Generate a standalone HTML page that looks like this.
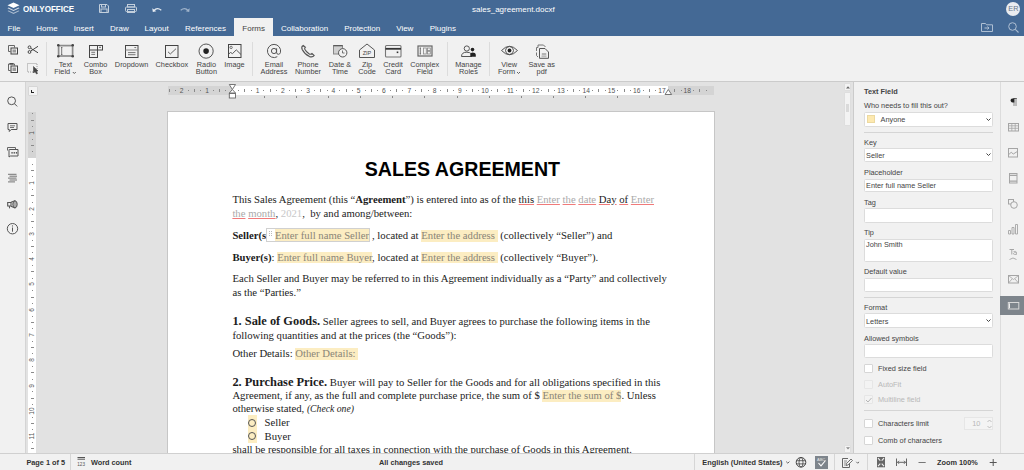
<!DOCTYPE html><html><head><meta charset="utf-8"><style>
html,body{margin:0;padding:0;width:1024px;height:470px;overflow:hidden;background:#e2e2e2;}
.t{position:absolute;white-space:pre;line-height:normal;}
.b{position:absolute;box-sizing:border-box;}
svg.b{overflow:visible}
</style></head><body>
<div class="b" style="left:0px;top:0px;width:1024px;height:36px;background:#446995"></div>
<svg class="b" style="left:7px;top:2px;" width="13" height="13" viewBox="0 0 13 13"><path d="M6.5 0.5 L12.5 3.3 L6.5 6.1 L0.5 3.3Z" fill="#fff"/><path d="M1.6 5.6 L6.5 7.9 L11.4 5.6 L12.5 6.2 L6.5 9 L0.5 6.2Z" fill="#fff" opacity=".75"/><path d="M1.6 8.5 L6.5 10.8 L11.4 8.5 L12.5 9.1 L6.5 12 L0.5 9.1Z" fill="#fff" opacity=".55"/></svg>
<div class="t" style="left:23px;top:2.5999999999999996px;font-family:'Liberation Sans', sans-serif;font-size:9.4px;color:#fff;font-weight:700;font-style:normal;transform:scaleX(0.86);transform-origin:0 0">ONLYOFFICE</div>
<svg class="b" style="left:99px;top:4px;" width="10" height="9" viewBox="0 0 10 9"><path d="M0.5 0.5H8L9.5 2V8.5H0.5Z" fill="none" stroke="#c3cfdc" stroke-width="1"/><rect x="2.5" y="0.5" width="4" height="2.5" fill="none" stroke="#c3cfdc"/><rect x="2" y="5" width="6" height="3.5" fill="none" stroke="#c3cfdc"/></svg>
<svg class="b" style="left:125px;top:4px;" width="12" height="9" viewBox="0 0 12 9"><rect x="2.5" y="0.5" width="7" height="2.5" fill="none" stroke="#c3cfdc"/><rect x="0.5" y="3" width="11" height="4.5" rx="1" fill="none" stroke="#c3cfdc"/><rect x="2.5" y="5.5" width="7" height="3" fill="none" stroke="#c3cfdc"/></svg>
<svg class="b" style="left:152px;top:6px;" width="10" height="6" viewBox="0 0 10 6"><path d="M2 4.5 Q5 1 9.3 4.2" fill="none" stroke="#e8edf3" stroke-width="1.2"/><path d="M0.3 2.2 L0.8 6 L4.3 5.2Z" fill="#e8edf3"/></svg>
<svg class="b" style="left:180px;top:6px;" width="10" height="6" viewBox="0 0 10 6"><path d="M8 4.5 Q5 1 0.7 4.2" fill="none" stroke="#9fb3ca" stroke-width="1.2"/><path d="M9.7 2.2 L9.2 6 L5.7 5.2Z" fill="#9fb3ca"/></svg>
<div class="t" style="left:472px;top:4.699999999999999px;font-family:'Liberation Sans', sans-serif;font-size:8px;color:#fff;font-weight:400;font-style:normal;">sales_agreement.docxf</div>
<div class="b" style="left:1006px;top:2px;width:14px;height:14px;border-radius:7px;background:#e9ecf1"></div>
<div class="t" style="left:1008.3px;top:4.1px;font-family:'Liberation Sans', sans-serif;font-size:7.3px;color:#66768a;font-weight:400;font-style:normal;">ER</div>
<div class="b" style="left:234px;top:18px;width:39px;height:19px;background:#f1f1f1"></div>
<div class="t" style="left:7.5px;top:23.8px;font-family:'Liberation Sans', sans-serif;font-size:8px;color:#fff;font-weight:400;font-style:normal;">File</div>
<div class="t" style="left:36.3px;top:23.8px;font-family:'Liberation Sans', sans-serif;font-size:8px;color:#fff;font-weight:400;font-style:normal;">Home</div>
<div class="t" style="left:73.8px;top:23.8px;font-family:'Liberation Sans', sans-serif;font-size:8px;color:#fff;font-weight:400;font-style:normal;">Insert</div>
<div class="t" style="left:110px;top:23.8px;font-family:'Liberation Sans', sans-serif;font-size:8px;color:#fff;font-weight:400;font-style:normal;">Draw</div>
<div class="t" style="left:144.6px;top:23.8px;font-family:'Liberation Sans', sans-serif;font-size:8px;color:#fff;font-weight:400;font-style:normal;">Layout</div>
<div class="t" style="left:185.1px;top:23.8px;font-family:'Liberation Sans', sans-serif;font-size:8px;color:#fff;font-weight:400;font-style:normal;">References</div>
<div class="t" style="left:242.3px;top:23.8px;font-family:'Liberation Sans', sans-serif;font-size:8px;color:#444;font-weight:400;font-style:normal;">Forms</div>
<div class="t" style="left:281px;top:23.8px;font-family:'Liberation Sans', sans-serif;font-size:8px;color:#fff;font-weight:400;font-style:normal;">Collaboration</div>
<div class="t" style="left:344.2px;top:23.8px;font-family:'Liberation Sans', sans-serif;font-size:8px;color:#fff;font-weight:400;font-style:normal;">Protection</div>
<div class="t" style="left:396.2px;top:23.8px;font-family:'Liberation Sans', sans-serif;font-size:8px;color:#fff;font-weight:400;font-style:normal;">View</div>
<div class="t" style="left:429.7px;top:23.8px;font-family:'Liberation Sans', sans-serif;font-size:8px;color:#fff;font-weight:400;font-style:normal;">Plugins</div>
<svg class="b" style="left:981px;top:23px;" width="12" height="9" viewBox="0 0 12 9"><path d="M0.5 0.5H4.5L5.5 1.8H11.5V8.5H0.5Z" fill="none" stroke="#aebfd3"/><path d="M3.5 5H8M6.5 3.5L8 5L6.5 6.5" fill="none" stroke="#aebfd3"/></svg>
<svg class="b" style="left:1008px;top:22px;" width="11" height="11" viewBox="0 0 11 11"><circle cx="4.5" cy="4.5" r="3.8" fill="none" stroke="#aebfd3" stroke-width="1"/><path d="M7.3 7.3L10.5 10.5" stroke="#aebfd3" stroke-width="1.1"/></svg>
<div class="b" style="left:0px;top:36px;width:1024px;height:45px;background:#f1f1f1"></div>
<div class="b" style="left:0px;top:81px;width:1024px;height:1px;background:#cbcbcb"></div>
<div class="t" style="left:-34.599999999999994px;width:200px;text-align:center;top:59.8px;font-family:'Liberation Sans', sans-serif;font-size:7.33px;color:#444;font-weight:400;">Text</div>
<div class="t" style="left:-37.8px;width:200px;text-align:center;top:67.1px;font-family:'Liberation Sans', sans-serif;font-size:7.33px;color:#444;font-weight:400;">Field</div>
<div class="t" style="left:-4.5px;width:200px;text-align:center;top:59.8px;font-family:'Liberation Sans', sans-serif;font-size:7.33px;color:#444;font-weight:400;">Combo</div>
<div class="t" style="left:-4.5px;width:200px;text-align:center;top:67.1px;font-family:'Liberation Sans', sans-serif;font-size:7.33px;color:#444;font-weight:400;">Box</div>
<div class="t" style="left:31.55000000000001px;width:200px;text-align:center;top:59.8px;font-family:'Liberation Sans', sans-serif;font-size:7.33px;color:#444;font-weight:400;">Dropdown</div>
<div class="t" style="left:71.85px;width:200px;text-align:center;top:59.8px;font-family:'Liberation Sans', sans-serif;font-size:7.33px;color:#444;font-weight:400;">Checkbox</div>
<div class="t" style="left:106.4px;width:200px;text-align:center;top:59.8px;font-family:'Liberation Sans', sans-serif;font-size:7.33px;color:#444;font-weight:400;">Radio</div>
<div class="t" style="left:106.4px;width:200px;text-align:center;top:67.1px;font-family:'Liberation Sans', sans-serif;font-size:7.33px;color:#444;font-weight:400;">Button</div>
<div class="t" style="left:134.45px;width:200px;text-align:center;top:59.8px;font-family:'Liberation Sans', sans-serif;font-size:7.33px;color:#444;font-weight:400;">Image</div>
<div class="t" style="left:174px;width:200px;text-align:center;top:59.8px;font-family:'Liberation Sans', sans-serif;font-size:7.33px;color:#444;font-weight:400;">Email</div>
<div class="t" style="left:174px;width:200px;text-align:center;top:67.1px;font-family:'Liberation Sans', sans-serif;font-size:7.33px;color:#444;font-weight:400;">Address</div>
<div class="t" style="left:208px;width:200px;text-align:center;top:59.8px;font-family:'Liberation Sans', sans-serif;font-size:7.33px;color:#444;font-weight:400;">Phone</div>
<div class="t" style="left:208px;width:200px;text-align:center;top:67.1px;font-family:'Liberation Sans', sans-serif;font-size:7.33px;color:#444;font-weight:400;">Number</div>
<div class="t" style="left:240px;width:200px;text-align:center;top:59.8px;font-family:'Liberation Sans', sans-serif;font-size:7.33px;color:#444;font-weight:400;">Date &amp;</div>
<div class="t" style="left:240px;width:200px;text-align:center;top:67.1px;font-family:'Liberation Sans', sans-serif;font-size:7.33px;color:#444;font-weight:400;">Time</div>
<div class="t" style="left:267.1px;width:200px;text-align:center;top:59.8px;font-family:'Liberation Sans', sans-serif;font-size:7.33px;color:#444;font-weight:400;">Zip</div>
<div class="t" style="left:267.1px;width:200px;text-align:center;top:67.1px;font-family:'Liberation Sans', sans-serif;font-size:7.33px;color:#444;font-weight:400;">Code</div>
<div class="t" style="left:293.1px;width:200px;text-align:center;top:59.8px;font-family:'Liberation Sans', sans-serif;font-size:7.33px;color:#444;font-weight:400;">Credit</div>
<div class="t" style="left:293.1px;width:200px;text-align:center;top:67.1px;font-family:'Liberation Sans', sans-serif;font-size:7.33px;color:#444;font-weight:400;">Card</div>
<div class="t" style="left:324.7px;width:200px;text-align:center;top:59.8px;font-family:'Liberation Sans', sans-serif;font-size:7.33px;color:#444;font-weight:400;">Complex</div>
<div class="t" style="left:324.7px;width:200px;text-align:center;top:67.1px;font-family:'Liberation Sans', sans-serif;font-size:7.33px;color:#444;font-weight:400;">Field</div>
<div class="t" style="left:368.45px;width:200px;text-align:center;top:59.8px;font-family:'Liberation Sans', sans-serif;font-size:7.33px;color:#444;font-weight:400;">Manage</div>
<div class="t" style="left:368.45px;width:200px;text-align:center;top:67.1px;font-family:'Liberation Sans', sans-serif;font-size:7.33px;color:#444;font-weight:400;">Roles</div>
<div class="t" style="left:409.2px;width:200px;text-align:center;top:59.8px;font-family:'Liberation Sans', sans-serif;font-size:7.33px;color:#444;font-weight:400;">View</div>
<div class="t" style="left:406.5px;width:200px;text-align:center;top:67.1px;font-family:'Liberation Sans', sans-serif;font-size:7.33px;color:#444;font-weight:400;">Form</div>
<div class="t" style="left:441.70000000000005px;width:200px;text-align:center;top:59.8px;font-family:'Liberation Sans', sans-serif;font-size:7.33px;color:#444;font-weight:400;">Save as</div>
<div class="t" style="left:441.70000000000005px;width:200px;text-align:center;top:67.1px;font-family:'Liberation Sans', sans-serif;font-size:7.33px;color:#444;font-weight:400;">pdf</div>
<div class="b" style="left:0px;top:82px;width:26px;height:371px;background:#f1f1f1"></div>
<div class="b" style="left:25px;top:82px;width:1px;height:371px;background:#d4d4d4"></div>
<div class="b" style="left:27.5px;top:86px;width:10px;height:10px;background:#f3f3f3;border:1px solid #d6d6d6;border-radius:1px"></div>
<div class="b" style="left:30.5px;top:89.5px;width:1.3px;height:3.5px;background:#222"></div>
<div class="b" style="left:30.5px;top:91.7px;width:3.8px;height:1.3px;background:#222"></div>
<div class="b" style="left:168px;top:86px;width:546px;height:9px;background:#d4d4d4"></div>
<div class="b" style="left:232px;top:86px;width:436px;height:9px;background:#fff"></div>
<div class="b" style="left:28px;top:112px;width:8px;height:341px;background:#d4d4d4"></div>
<div class="b" style="left:28px;top:158px;width:8px;height:295px;background:#fff"></div>
<div class="b" style="left:167px;top:111px;width:548px;height:342px;background:#fff;border:1px solid #c6c6c6;border-bottom:none"></div>
<div class="b" style="left:843.7px;top:83px;width:7.6px;height:7.8px;background:#f3f3f3;border:1px solid #dedede;border-radius:1px"></div>
<div class="b" style="left:843.7px;top:92px;width:7.6px;height:34px;background:#f3f3f3;border:1px solid #dedede;border-radius:1px"></div>
<div class="b" style="left:846.2px;top:104px;width:2.7px;height:7.7px;background:#dadada"></div>
<div class="b" style="left:843.7px;top:444.5px;width:7.6px;height:8px;background:#f3f3f3;border:1px solid #dedede;border-radius:1px"></div>
<svg class="b" style="left:845.5px;top:85.5px;" width="4" height="3" viewBox="0 0 4 3"><path d="M0 2.5L2 0.3L4 2.5Z" fill="#666"/></svg>
<svg class="b" style="left:845.5px;top:447px;" width="4" height="3" viewBox="0 0 4 3"><path d="M0 0.3L2 2.5L4 0.3Z" fill="#888"/></svg>
<div class="b" style="left:853px;top:82px;width:147px;height:371px;background:#f1f1f1"></div>
<div class="b" style="left:853px;top:82px;width:1px;height:371px;background:#cbcbcb"></div>
<div class="b" style="left:1000px;top:82px;width:24px;height:371px;background:#f1f1f1"></div>
<div class="b" style="left:1000px;top:82px;width:1px;height:371px;background:#dcdcdc"></div>
<div class="b" style="left:1000px;top:296px;width:24px;height:19px;background:#7e858c"></div>
<div class="t" style="left:364.8px;top:157.5px;font-family:'Liberation Sans', sans-serif;font-size:19.6px;color:#000;font-weight:700;font-style:normal;">SALES AGREEMENT</div>
<div class="t" style="left:232.4px;top:193.2px;font-family:'Liberation Serif', serif;font-size:10.7px;color:#1c1c1c">This Sales Agreement (this “<span style="font-weight:700">Agreement</span>”) is entered into as of the <span style="text-decoration:underline;text-decoration-color:#f07a7a;text-underline-offset:0.5px">this</span> <span style="color:#aaa;text-decoration:underline;text-decoration-color:#f07a7a;text-underline-offset:0.5px">Enter</span> <span style="color:#aaa;text-decoration:underline;text-decoration-color:#f07a7a;text-underline-offset:0.5px">the</span> <span style="color:#aaa;text-decoration:underline;text-decoration-color:#f07a7a;text-underline-offset:0.5px">date</span> <span style="text-decoration:underline;text-decoration-color:#f07a7a;text-underline-offset:0.5px">Day</span> <span style="text-decoration:underline;text-decoration-color:#f07a7a;text-underline-offset:0.5px">of</span> <span style="color:#aaa;text-decoration:underline;text-decoration-color:#f07a7a;text-underline-offset:0.5px">Enter</span></div>
<div class="t" style="left:232.4px;top:207px;font-family:'Liberation Serif', serif;font-size:10.7px;color:#1c1c1c"><span style="color:#aaa;text-decoration:underline;text-decoration-color:#f07a7a;text-underline-offset:0.5px">the</span> <span style="color:#aaa;text-decoration:underline;text-decoration-color:#f07a7a;text-underline-offset:0.5px">month</span>, <span style="color:#c8c8c8">2021</span>,  by and among/between:</div>
<div class="t" style="left:232.4px;top:229px;font-family:'Liberation Serif', serif;font-size:10.7px;color:#1c1c1c"><span style="font-weight:700">Seller(s</span></div>
<div class="b" style="left:266px;top:228px;width:104px;height:14px;border:1px solid #d0d0d0;background:#fff"></div>
<div class="b" style="left:275px;top:229px;width:94px;height:12px;background:#fcedc2"></div>
<div class="b" style="left:269px;top:230.5px;width:3px;height:5px;border-left:1px dotted #bbb;border-right:1px dotted #bbb"></div>
<div class="t" style="left:275.0px;top:229px;font-family:'Liberation Serif', serif;font-size:10.7px;color:#1c1c1c"><span style="color:#8a8578">Enter full name Seller</span></div>
<div class="t" style="left:372.0px;top:229px;font-family:'Liberation Serif', serif;font-size:10.7px;color:#1c1c1c">, located at <span style="background:linear-gradient(transparent 0.8px,#fcedc2 0.8px);padding-bottom:0.8px;color:#8a8578">Enter the address </span> (collectively “Seller”) and</div>
<div class="t" style="left:232.4px;top:250.5px;font-family:'Liberation Serif', serif;font-size:10.7px;color:#1c1c1c"><span style="font-weight:700">Buyer(s)</span>: <span style="background:linear-gradient(transparent 0.8px,#fcedc2 0.8px);padding-bottom:0.8px;color:#8a8578">Enter full name Buyer</span>, located at <span style="background:linear-gradient(transparent 0.8px,#fcedc2 0.8px);padding-bottom:0.8px;color:#8a8578">Enter the address </span> (collectively “Buyer”).</div>
<div class="t" style="left:232.4px;top:272.2px;font-family:'Liberation Serif', serif;font-size:10.7px;color:#1c1c1c">Each Seller and Buyer may be referred to in this Agreement individually as a “Party” and collectively</div>
<div class="t" style="left:232.4px;top:286px;font-family:'Liberation Serif', serif;font-size:10.7px;color:#1c1c1c">as the “Parties.”</div>
<div class="t" style="left:232.4px;top:314px;font-family:'Liberation Serif', serif;font-size:10.7px;color:#1c1c1c"><span style="font-weight:700;font-size:12.4px">1. Sale of Goods.</span> Seller agrees to sell, and Buyer agrees to purchase the following items in the</div>
<div class="t" style="left:232.4px;top:328.6px;font-family:'Liberation Serif', serif;font-size:10.7px;color:#1c1c1c">following quantities and at the prices (the “Goods”):</div>
<div class="t" style="left:232.4px;top:347.4px;font-family:'Liberation Serif', serif;font-size:10.7px;color:#1c1c1c">Other Details: <span style="background:linear-gradient(transparent 0.8px,#fcedc2 0.8px);padding-bottom:0.8px;color:#8a8578">Other Details: </span></div>
<div class="t" style="left:232.4px;top:374.7px;font-family:'Liberation Serif', serif;font-size:10.7px;color:#1c1c1c"><span style="font-weight:700;font-size:12.4px">2. Purchase Price.</span> Buyer will pay to Seller for the Goods and for all obligations specified in this</div>
<div class="t" style="left:232.4px;top:389.3px;font-family:'Liberation Serif', serif;font-size:10.7px;color:#1c1c1c">Agreement, if any, as the full and complete purchase price, the sum of $ <span style="background:linear-gradient(transparent 0.8px,#fcedc2 0.8px);padding-bottom:0.8px;color:#8a8578">Enter the sum of $</span>. Unless</div>
<div class="t" style="left:232.4px;top:402.3px;font-family:'Liberation Serif', serif;font-size:10.7px;color:#1c1c1c">otherwise stated, <span style="font-style:italic;font-size:9.7px">(Check one)</span></div>
<div class="b" style="left:248px;top:415px;width:9px;height:28px;background:#fcedc2"></div>
<div class="b" style="left:248px;top:418.6px;width:8.2px;height:8.2px;border:1px solid #555;border-radius:50%"></div>
<div class="b" style="left:248px;top:432.3px;width:8.2px;height:8.2px;border:1px solid #555;border-radius:50%"></div>
<div class="t" style="left:264.6px;top:416.3px;font-family:'Liberation Serif', serif;font-size:10.7px;color:#1c1c1c">Seller</div>
<div class="t" style="left:264.6px;top:429.6px;font-family:'Liberation Serif', serif;font-size:10.7px;color:#1c1c1c">Buyer</div>
<div class="t" style="left:232.4px;top:443.2px;font-family:'Liberation Serif', serif;font-size:10.7px;color:#1c1c1c">shall be responsible for all taxes in connection with the purchase of Goods in this Agreement.</div>
<div class="t" style="left:864px;top:87px;font-family:'Liberation Sans', sans-serif;font-size:7.33px;color:#444;font-weight:700;font-style:normal;">Text Field</div>
<div class="t" style="left:864px;top:101px;font-family:'Liberation Sans', sans-serif;font-size:7.33px;color:#444;font-weight:400;font-style:normal;">Who needs to fill this out?</div>
<div class="b" style="left:863.5px;top:112px;width:129.5px;height:14.5px;background:#fff;border:1px solid #dcdcdc;border-radius:1.5px"></div>
<div class="b" style="left:867.3px;top:115.2px;width:8px;height:8px;background:#fde9b0;border:1px solid #ecd9a0"></div>
<div class="t" style="left:880.6px;top:114.8px;font-family:'Liberation Sans', sans-serif;font-size:7.33px;color:#444;font-weight:400;font-style:normal;">Anyone</div>
<svg class="b" style="left:986px;top:117.5px;" width="5" height="3" viewBox="0 0 5 3"><path d="M0.5 0.5L2.5 2.5L4.5 0.5" fill="none" stroke="#444" stroke-width="1"/></svg>
<div class="b" style="left:864px;top:132px;width:129px;height:1px;background:#d5d5d5"></div>
<div class="t" style="left:864px;top:138px;font-family:'Liberation Sans', sans-serif;font-size:7.33px;color:#444;font-weight:400;font-style:normal;">Key</div>
<div class="b" style="left:863.5px;top:147.6px;width:129.5px;height:14.5px;background:#fff;border:1px solid #dcdcdc;border-radius:1.5px"></div>
<div class="t" style="left:866px;top:150.8px;font-family:'Liberation Sans', sans-serif;font-size:7.33px;color:#444;font-weight:400;font-style:normal;">Seller</div>
<svg class="b" style="left:986px;top:153.35px;" width="5" height="3" viewBox="0 0 5 3"><path d="M0.5 0.5L2.5 2.5L4.5 0.5" fill="none" stroke="#444" stroke-width="1"/></svg>
<div class="t" style="left:864px;top:167.9px;font-family:'Liberation Sans', sans-serif;font-size:7.33px;color:#444;font-weight:400;font-style:normal;">Placeholder</div>
<div class="b" style="left:863.5px;top:178.7px;width:129.5px;height:13.5px;background:#fff;border:1px solid #dcdcdc;border-radius:1.5px"></div>
<div class="t" style="left:866px;top:181.3px;font-family:'Liberation Sans', sans-serif;font-size:7.33px;color:#444;font-weight:400;font-style:normal;">Enter full name Seller</div>
<div class="t" style="left:864px;top:197.8px;font-family:'Liberation Sans', sans-serif;font-size:7.33px;color:#444;font-weight:400;font-style:normal;">Tag</div>
<div class="b" style="left:863.5px;top:208.4px;width:129.5px;height:14.299999999999983px;background:#fff;border:1px solid #dcdcdc;border-radius:1.5px"></div>
<div class="t" style="left:864px;top:227.6px;font-family:'Liberation Sans', sans-serif;font-size:7.33px;color:#444;font-weight:400;font-style:normal;">Tip</div>
<div class="b" style="left:863.5px;top:238.5px;width:129.5px;height:23.69999999999999px;background:#fff;border:1px solid #dcdcdc;border-radius:1.5px"></div>
<div class="t" style="left:866px;top:239.6px;font-family:'Liberation Sans', sans-serif;font-size:7.33px;color:#444;font-weight:400;font-style:normal;">John Smith</div>
<div class="t" style="left:864px;top:267.2px;font-family:'Liberation Sans', sans-serif;font-size:7.33px;color:#444;font-weight:400;font-style:normal;">Default value</div>
<div class="b" style="left:863.5px;top:278px;width:129.5px;height:14px;background:#fff;border:1px solid #dcdcdc;border-radius:1.5px"></div>
<div class="b" style="left:864px;top:297px;width:129px;height:1px;background:#d5d5d5"></div>
<div class="t" style="left:864px;top:303.3px;font-family:'Liberation Sans', sans-serif;font-size:7.33px;color:#444;font-weight:400;font-style:normal;">Format</div>
<div class="b" style="left:863.5px;top:313.4px;width:129.5px;height:14.800000000000011px;background:#fff;border:1px solid #dcdcdc;border-radius:1.5px"></div>
<div class="t" style="left:866px;top:316.6px;font-family:'Liberation Sans', sans-serif;font-size:7.33px;color:#444;font-weight:400;font-style:normal;">Letters</div>
<svg class="b" style="left:986px;top:319.29999999999995px;" width="5" height="3" viewBox="0 0 5 3"><path d="M0.5 0.5L2.5 2.5L4.5 0.5" fill="none" stroke="#444" stroke-width="1"/></svg>
<div class="t" style="left:864px;top:334px;font-family:'Liberation Sans', sans-serif;font-size:7.33px;color:#444;font-weight:400;font-style:normal;">Allowed symbols</div>
<div class="b" style="left:863.5px;top:344px;width:129.5px;height:14.300000000000011px;background:#fff;border:1px solid #dcdcdc;border-radius:1.5px"></div>
<div class="b" style="left:863.5px;top:364.4px;width:9px;height:9px;background:#fff;border:1px solid #d6d6d6;border-radius:1px"></div>
<div class="t" style="left:878px;top:364px;font-family:'Liberation Sans', sans-serif;font-size:7.33px;color:#444;font-weight:400;font-style:normal;">Fixed size field</div>
<div class="b" style="left:863.5px;top:380px;width:9px;height:9px;background:#f3f3f3;border:1px solid #e6e6e6;border-radius:1px"></div>
<div class="t" style="left:878px;top:379.8px;font-family:'Liberation Sans', sans-serif;font-size:7.33px;color:#b8b8b8;font-weight:400;font-style:normal;">AutoFit</div>
<div class="b" style="left:863.5px;top:395px;width:9px;height:9px;background:#f3f3f3;border:1px solid #e6e6e6;border-radius:1px"></div>
<svg class="b" style="left:864.5px;top:396.5px;" width="7" height="6" viewBox="0 0 7 6"><path d="M1 3L3 5L6.5 1" fill="none" stroke="#b5b5b5" stroke-width="1"/></svg>
<div class="t" style="left:878px;top:394.6px;font-family:'Liberation Sans', sans-serif;font-size:7.33px;color:#b8b8b8;font-weight:400;font-style:normal;">Multiline field</div>
<div class="b" style="left:864px;top:410px;width:129px;height:1px;background:#d5d5d5"></div>
<div class="b" style="left:863.5px;top:418.6px;width:9px;height:9px;background:#fff;border:1px solid #d6d6d6;border-radius:1px"></div>
<div class="t" style="left:878px;top:418.6px;font-family:'Liberation Sans', sans-serif;font-size:7.33px;color:#444;font-weight:400;font-style:normal;">Characters limit</div>
<div class="b" style="left:963.6px;top:416.7px;width:29.4px;height:13.3px;background:#f4f4f4;border:1px solid #e6e6e6"></div>
<div class="t" style="left:972.3px;top:418.8px;font-family:'Liberation Sans', sans-serif;font-size:7.33px;color:#b8b8b8;font-weight:400;font-style:normal;">10</div>
<svg class="b" style="left:987px;top:418.5px;" width="5" height="10" viewBox="0 0 5 10"><path d="M0.5 3L2.5 1L4.5 3M0.5 7L2.5 9L4.5 7" fill="none" stroke="#b8b8b8" stroke-width=".9"/></svg>
<div class="b" style="left:863.5px;top:436px;width:9px;height:9px;background:#fff;border:1px solid #d6d6d6;border-radius:1px"></div>
<div class="t" style="left:878px;top:436.2px;font-family:'Liberation Sans', sans-serif;font-size:7.33px;color:#444;font-weight:400;font-style:normal;">Comb of characters</div>
<div class="t" style="left:878.7px;top:450.6px;font-family:'Liberation Sans', sans-serif;font-size:7.33px;color:#444;font-weight:400;font-style:normal;">Cell width</div>
<div class="b" style="left:0px;top:453px;width:1024px;height:17px;background:#f1f1f1"></div>
<div class="b" style="left:0px;top:453px;width:1024px;height:1px;background:#d0d0d0"></div>
<div class="t" style="left:26.4px;top:458px;font-family:'Liberation Sans', sans-serif;font-size:7.33px;color:#333;font-weight:700;font-style:normal;">Page 1 of 5</div>
<div class="b" style="left:70px;top:454px;width:1px;height:16px;background:#d6d6d6"></div>
<div class="t" style="left:90.9px;top:458px;font-family:'Liberation Sans', sans-serif;font-size:7.33px;color:#333;font-weight:700;font-style:normal;">Word count</div>
<div class="t" style="left:379px;top:458px;font-family:'Liberation Sans', sans-serif;font-size:7.33px;color:#333;font-weight:700;font-style:normal;">All changes saved</div>
<div class="b" style="left:694px;top:454px;width:1px;height:16px;background:#d6d6d6"></div>
<div class="t" style="left:702.3px;top:457.6px;font-family:'Liberation Sans', sans-serif;font-size:7.33px;color:#333;font-weight:700;font-style:normal;">English (United States)</div>
<div class="b" style="left:815px;top:455.5px;width:13px;height:13px;background:#7e858c"></div>
<div class="b" style="left:834px;top:454px;width:1px;height:16px;background:#d6d6d6"></div>
<div class="b" style="left:867px;top:454px;width:1px;height:16px;background:#d6d6d6"></div>
<div class="t" style="left:937px;top:458px;font-family:'Liberation Sans', sans-serif;font-size:7.33px;color:#333;font-weight:700;font-style:normal;">Zoom 100%</div>
<div class="b" style="left:168.60000000000002px;top:88.5px;width:1px;height:3px;background:#8a8a8a"></div>
<div class="b" style="left:174.92000000000002px;top:89.5px;width:1px;height:1px;background:#8a8a8a"></div>
<div class="t" style="left:81.74000000000001px;width:200px;text-align:center;top:87.3px;font-family:'Liberation Sans', sans-serif;font-size:6.7px;color:#555;font-weight:400;">2</div>
<div class="b" style="left:187.56px;top:89.5px;width:1px;height:1px;background:#8a8a8a"></div>
<div class="b" style="left:193.88px;top:88.5px;width:1px;height:3px;background:#8a8a8a"></div>
<div class="b" style="left:200.20000000000002px;top:89.5px;width:1px;height:1px;background:#8a8a8a"></div>
<div class="t" style="left:107.02000000000001px;width:200px;text-align:center;top:87.3px;font-family:'Liberation Sans', sans-serif;font-size:6.7px;color:#555;font-weight:400;">1</div>
<div class="b" style="left:212.84px;top:89.5px;width:1px;height:1px;background:#8a8a8a"></div>
<div class="b" style="left:219.16000000000003px;top:88.5px;width:1px;height:3px;background:#8a8a8a"></div>
<div class="b" style="left:225.48000000000002px;top:89.5px;width:1px;height:1px;background:#8a8a8a"></div>
<div class="b" style="left:238.12px;top:89.5px;width:1px;height:1px;background:#8a8a8a"></div>
<div class="b" style="left:244.44px;top:88.5px;width:1px;height:3px;background:#8a8a8a"></div>
<div class="b" style="left:250.76000000000002px;top:89.5px;width:1px;height:1px;background:#8a8a8a"></div>
<div class="t" style="left:157.58000000000004px;width:200px;text-align:center;top:87.3px;font-family:'Liberation Sans', sans-serif;font-size:6.7px;color:#555;font-weight:400;">1</div>
<div class="b" style="left:263.40000000000003px;top:89.5px;width:1px;height:1px;background:#8a8a8a"></div>
<div class="b" style="left:269.72px;top:88.5px;width:1px;height:3px;background:#8a8a8a"></div>
<div class="b" style="left:276.04px;top:89.5px;width:1px;height:1px;background:#8a8a8a"></div>
<div class="t" style="left:182.86px;width:200px;text-align:center;top:87.3px;font-family:'Liberation Sans', sans-serif;font-size:6.7px;color:#555;font-weight:400;">2</div>
<div class="b" style="left:288.68px;top:89.5px;width:1px;height:1px;background:#8a8a8a"></div>
<div class="b" style="left:295.0px;top:88.5px;width:1px;height:3px;background:#8a8a8a"></div>
<div class="b" style="left:301.32px;top:89.5px;width:1px;height:1px;background:#8a8a8a"></div>
<div class="t" style="left:208.14px;width:200px;text-align:center;top:87.3px;font-family:'Liberation Sans', sans-serif;font-size:6.7px;color:#555;font-weight:400;">3</div>
<div class="b" style="left:313.96px;top:89.5px;width:1px;height:1px;background:#8a8a8a"></div>
<div class="b" style="left:320.28px;top:88.5px;width:1px;height:3px;background:#8a8a8a"></div>
<div class="b" style="left:326.59999999999997px;top:89.5px;width:1px;height:1px;background:#8a8a8a"></div>
<div class="t" style="left:233.42000000000002px;width:200px;text-align:center;top:87.3px;font-family:'Liberation Sans', sans-serif;font-size:6.7px;color:#555;font-weight:400;">4</div>
<div class="b" style="left:339.24px;top:89.5px;width:1px;height:1px;background:#8a8a8a"></div>
<div class="b" style="left:345.56px;top:88.5px;width:1px;height:3px;background:#8a8a8a"></div>
<div class="b" style="left:351.88px;top:89.5px;width:1px;height:1px;background:#8a8a8a"></div>
<div class="t" style="left:258.70000000000005px;width:200px;text-align:center;top:87.3px;font-family:'Liberation Sans', sans-serif;font-size:6.7px;color:#555;font-weight:400;">5</div>
<div class="b" style="left:364.52000000000004px;top:89.5px;width:1px;height:1px;background:#8a8a8a"></div>
<div class="b" style="left:370.84000000000003px;top:88.5px;width:1px;height:3px;background:#8a8a8a"></div>
<div class="b" style="left:377.16px;top:89.5px;width:1px;height:1px;background:#8a8a8a"></div>
<div class="t" style="left:283.98px;width:200px;text-align:center;top:87.3px;font-family:'Liberation Sans', sans-serif;font-size:6.7px;color:#555;font-weight:400;">6</div>
<div class="b" style="left:389.8px;top:89.5px;width:1px;height:1px;background:#8a8a8a"></div>
<div class="b" style="left:396.12px;top:88.5px;width:1px;height:3px;background:#8a8a8a"></div>
<div class="b" style="left:402.44px;top:89.5px;width:1px;height:1px;background:#8a8a8a"></div>
<div class="t" style="left:309.26px;width:200px;text-align:center;top:87.3px;font-family:'Liberation Sans', sans-serif;font-size:6.7px;color:#555;font-weight:400;">7</div>
<div class="b" style="left:415.08px;top:89.5px;width:1px;height:1px;background:#8a8a8a"></div>
<div class="b" style="left:421.4px;top:88.5px;width:1px;height:3px;background:#8a8a8a"></div>
<div class="b" style="left:427.71999999999997px;top:89.5px;width:1px;height:1px;background:#8a8a8a"></div>
<div class="t" style="left:334.54px;width:200px;text-align:center;top:87.3px;font-family:'Liberation Sans', sans-serif;font-size:6.7px;color:#555;font-weight:400;">8</div>
<div class="b" style="left:440.36px;top:89.5px;width:1px;height:1px;background:#8a8a8a"></div>
<div class="b" style="left:446.68px;top:88.5px;width:1px;height:3px;background:#8a8a8a"></div>
<div class="b" style="left:453.0px;top:89.5px;width:1px;height:1px;background:#8a8a8a"></div>
<div class="t" style="left:359.82000000000005px;width:200px;text-align:center;top:87.3px;font-family:'Liberation Sans', sans-serif;font-size:6.7px;color:#555;font-weight:400;">9</div>
<div class="b" style="left:465.64000000000004px;top:89.5px;width:1px;height:1px;background:#8a8a8a"></div>
<div class="b" style="left:471.96000000000004px;top:88.5px;width:1px;height:3px;background:#8a8a8a"></div>
<div class="b" style="left:478.28000000000003px;top:89.5px;width:1px;height:1px;background:#8a8a8a"></div>
<div class="t" style="left:385.1px;width:200px;text-align:center;top:87.3px;font-family:'Liberation Sans', sans-serif;font-size:6.7px;color:#555;font-weight:400;">10</div>
<div class="b" style="left:490.92px;top:89.5px;width:1px;height:1px;background:#8a8a8a"></div>
<div class="b" style="left:497.24px;top:88.5px;width:1px;height:3px;background:#8a8a8a"></div>
<div class="b" style="left:503.56px;top:89.5px;width:1px;height:1px;background:#8a8a8a"></div>
<div class="t" style="left:410.38000000000005px;width:200px;text-align:center;top:87.3px;font-family:'Liberation Sans', sans-serif;font-size:6.7px;color:#555;font-weight:400;">11</div>
<div class="b" style="left:516.2px;top:89.5px;width:1px;height:1px;background:#8a8a8a"></div>
<div class="b" style="left:522.5200000000001px;top:88.5px;width:1px;height:3px;background:#8a8a8a"></div>
<div class="b" style="left:528.84px;top:89.5px;width:1px;height:1px;background:#8a8a8a"></div>
<div class="t" style="left:435.6600000000001px;width:200px;text-align:center;top:87.3px;font-family:'Liberation Sans', sans-serif;font-size:6.7px;color:#555;font-weight:400;">12</div>
<div class="b" style="left:541.4800000000001px;top:89.5px;width:1px;height:1px;background:#8a8a8a"></div>
<div class="b" style="left:547.8000000000001px;top:88.5px;width:1px;height:3px;background:#8a8a8a"></div>
<div class="b" style="left:554.1200000000001px;top:89.5px;width:1px;height:1px;background:#8a8a8a"></div>
<div class="t" style="left:460.94000000000005px;width:200px;text-align:center;top:87.3px;font-family:'Liberation Sans', sans-serif;font-size:6.7px;color:#555;font-weight:400;">13</div>
<div class="b" style="left:566.7600000000001px;top:89.5px;width:1px;height:1px;background:#8a8a8a"></div>
<div class="b" style="left:573.08px;top:88.5px;width:1px;height:3px;background:#8a8a8a"></div>
<div class="b" style="left:579.4000000000001px;top:89.5px;width:1px;height:1px;background:#8a8a8a"></div>
<div class="t" style="left:486.22px;width:200px;text-align:center;top:87.3px;font-family:'Liberation Sans', sans-serif;font-size:6.7px;color:#555;font-weight:400;">14</div>
<div class="b" style="left:592.0400000000001px;top:89.5px;width:1px;height:1px;background:#8a8a8a"></div>
<div class="b" style="left:598.36px;top:88.5px;width:1px;height:3px;background:#8a8a8a"></div>
<div class="b" style="left:604.6800000000001px;top:89.5px;width:1px;height:1px;background:#8a8a8a"></div>
<div class="t" style="left:511.5px;width:200px;text-align:center;top:87.3px;font-family:'Liberation Sans', sans-serif;font-size:6.7px;color:#555;font-weight:400;">15</div>
<div class="b" style="left:617.32px;top:89.5px;width:1px;height:1px;background:#8a8a8a"></div>
<div class="b" style="left:623.64px;top:88.5px;width:1px;height:3px;background:#8a8a8a"></div>
<div class="b" style="left:629.96px;top:89.5px;width:1px;height:1px;background:#8a8a8a"></div>
<div class="t" style="left:536.78px;width:200px;text-align:center;top:87.3px;font-family:'Liberation Sans', sans-serif;font-size:6.7px;color:#555;font-weight:400;">16</div>
<div class="b" style="left:642.6px;top:89.5px;width:1px;height:1px;background:#8a8a8a"></div>
<div class="b" style="left:648.92px;top:88.5px;width:1px;height:3px;background:#8a8a8a"></div>
<div class="b" style="left:655.24px;top:89.5px;width:1px;height:1px;background:#8a8a8a"></div>
<div class="t" style="left:562.06px;width:200px;text-align:center;top:87.3px;font-family:'Liberation Sans', sans-serif;font-size:6.7px;color:#555;font-weight:400;">17</div>
<div class="b" style="left:667.88px;top:89.5px;width:1px;height:1px;background:#8a8a8a"></div>
<div class="b" style="left:674.1999999999999px;top:88.5px;width:1px;height:3px;background:#8a8a8a"></div>
<div class="b" style="left:680.52px;top:89.5px;width:1px;height:1px;background:#8a8a8a"></div>
<div class="t" style="left:587.34px;width:200px;text-align:center;top:87.3px;font-family:'Liberation Sans', sans-serif;font-size:6.7px;color:#555;font-weight:400;">18</div>
<div class="b" style="left:693.1600000000001px;top:89.5px;width:1px;height:1px;background:#8a8a8a"></div>
<div class="b" style="left:699.48px;top:88.5px;width:1px;height:3px;background:#8a8a8a"></div>
<div class="b" style="left:705.8000000000001px;top:89.5px;width:1px;height:1px;background:#8a8a8a"></div>
<div class="b" style="left:263.90000000000003px;top:96px;width:1px;height:2px;background:#888"></div>
<div class="b" style="left:296.0px;top:96px;width:1px;height:2px;background:#888"></div>
<div class="b" style="left:328.1px;top:96px;width:1px;height:2px;background:#888"></div>
<div class="b" style="left:360.20000000000005px;top:96px;width:1px;height:2px;background:#888"></div>
<div class="b" style="left:392.3px;top:96px;width:1px;height:2px;background:#888"></div>
<div class="b" style="left:424.40000000000003px;top:96px;width:1px;height:2px;background:#888"></div>
<div class="b" style="left:456.5px;top:96px;width:1px;height:2px;background:#888"></div>
<div class="b" style="left:488.6px;top:96px;width:1px;height:2px;background:#888"></div>
<div class="b" style="left:520.7px;top:96px;width:1px;height:2px;background:#888"></div>
<div class="b" style="left:552.8px;top:96px;width:1px;height:2px;background:#888"></div>
<div class="b" style="left:584.9000000000001px;top:96px;width:1px;height:2px;background:#888"></div>
<div class="b" style="left:617.0px;top:96px;width:1px;height:2px;background:#888"></div>
<div class="b" style="left:649.1px;top:96px;width:1px;height:2px;background:#888"></div>
<div class="b" style="left:31.5px;top:113.25999999999999px;width:1px;height:1px;background:#8a8a8a"></div>
<div class="b" style="left:30.5px;top:119.58px;width:3px;height:1px;background:#8a8a8a"></div>
<div class="b" style="left:31.5px;top:125.9px;width:1px;height:1px;background:#8a8a8a"></div>
<div class="t" style="left:22px;top:127.72px;width:20px;height:10px;line-height:10px;text-align:center;font-family:'Liberation Sans', sans-serif;font-size:6.5px;color:#555;transform:rotate(-90deg)">1</div>
<div class="b" style="left:31.5px;top:138.54px;width:1px;height:1px;background:#8a8a8a"></div>
<div class="b" style="left:30.5px;top:144.86px;width:3px;height:1px;background:#8a8a8a"></div>
<div class="b" style="left:31.5px;top:151.18px;width:1px;height:1px;background:#8a8a8a"></div>
<div class="b" style="left:31.5px;top:163.82px;width:1px;height:1px;background:#8a8a8a"></div>
<div class="b" style="left:30.5px;top:170.14px;width:3px;height:1px;background:#8a8a8a"></div>
<div class="b" style="left:31.5px;top:176.46px;width:1px;height:1px;background:#8a8a8a"></div>
<div class="t" style="left:22px;top:178.28px;width:20px;height:10px;line-height:10px;text-align:center;font-family:'Liberation Sans', sans-serif;font-size:6.5px;color:#555;transform:rotate(-90deg)">1</div>
<div class="b" style="left:31.5px;top:189.1px;width:1px;height:1px;background:#8a8a8a"></div>
<div class="b" style="left:30.5px;top:195.42000000000002px;width:3px;height:1px;background:#8a8a8a"></div>
<div class="b" style="left:31.5px;top:201.74px;width:1px;height:1px;background:#8a8a8a"></div>
<div class="t" style="left:22px;top:203.56px;width:20px;height:10px;line-height:10px;text-align:center;font-family:'Liberation Sans', sans-serif;font-size:6.5px;color:#555;transform:rotate(-90deg)">2</div>
<div class="b" style="left:31.5px;top:214.38px;width:1px;height:1px;background:#8a8a8a"></div>
<div class="b" style="left:30.5px;top:220.7px;width:3px;height:1px;background:#8a8a8a"></div>
<div class="b" style="left:31.5px;top:227.02px;width:1px;height:1px;background:#8a8a8a"></div>
<div class="t" style="left:22px;top:228.84px;width:20px;height:10px;line-height:10px;text-align:center;font-family:'Liberation Sans', sans-serif;font-size:6.5px;color:#555;transform:rotate(-90deg)">3</div>
<div class="b" style="left:31.5px;top:239.66px;width:1px;height:1px;background:#8a8a8a"></div>
<div class="b" style="left:30.5px;top:245.98000000000002px;width:3px;height:1px;background:#8a8a8a"></div>
<div class="b" style="left:31.5px;top:252.3px;width:1px;height:1px;background:#8a8a8a"></div>
<div class="t" style="left:22px;top:254.12px;width:20px;height:10px;line-height:10px;text-align:center;font-family:'Liberation Sans', sans-serif;font-size:6.5px;color:#555;transform:rotate(-90deg)">4</div>
<div class="b" style="left:31.5px;top:264.94px;width:1px;height:1px;background:#8a8a8a"></div>
<div class="b" style="left:30.5px;top:271.26px;width:3px;height:1px;background:#8a8a8a"></div>
<div class="b" style="left:31.5px;top:277.58px;width:1px;height:1px;background:#8a8a8a"></div>
<div class="t" style="left:22px;top:279.4px;width:20px;height:10px;line-height:10px;text-align:center;font-family:'Liberation Sans', sans-serif;font-size:6.5px;color:#555;transform:rotate(-90deg)">5</div>
<div class="b" style="left:31.5px;top:290.21999999999997px;width:1px;height:1px;background:#8a8a8a"></div>
<div class="b" style="left:30.5px;top:296.53999999999996px;width:3px;height:1px;background:#8a8a8a"></div>
<div class="b" style="left:31.5px;top:302.85999999999996px;width:1px;height:1px;background:#8a8a8a"></div>
<div class="t" style="left:22px;top:304.68px;width:20px;height:10px;line-height:10px;text-align:center;font-family:'Liberation Sans', sans-serif;font-size:6.5px;color:#555;transform:rotate(-90deg)">6</div>
<div class="b" style="left:31.5px;top:315.5px;width:1px;height:1px;background:#8a8a8a"></div>
<div class="b" style="left:30.5px;top:321.82px;width:3px;height:1px;background:#8a8a8a"></div>
<div class="b" style="left:31.5px;top:328.14px;width:1px;height:1px;background:#8a8a8a"></div>
<div class="t" style="left:22px;top:329.96000000000004px;width:20px;height:10px;line-height:10px;text-align:center;font-family:'Liberation Sans', sans-serif;font-size:6.5px;color:#555;transform:rotate(-90deg)">7</div>
<div class="b" style="left:31.5px;top:340.78000000000003px;width:1px;height:1px;background:#8a8a8a"></div>
<div class="b" style="left:30.5px;top:347.1px;width:3px;height:1px;background:#8a8a8a"></div>
<div class="b" style="left:31.5px;top:353.42px;width:1px;height:1px;background:#8a8a8a"></div>
<div class="t" style="left:22px;top:355.24px;width:20px;height:10px;line-height:10px;text-align:center;font-family:'Liberation Sans', sans-serif;font-size:6.5px;color:#555;transform:rotate(-90deg)">8</div>
<div class="b" style="left:31.5px;top:366.06px;width:1px;height:1px;background:#8a8a8a"></div>
<div class="b" style="left:30.5px;top:372.38px;width:3px;height:1px;background:#8a8a8a"></div>
<div class="b" style="left:31.5px;top:378.7px;width:1px;height:1px;background:#8a8a8a"></div>
<div class="t" style="left:22px;top:380.52px;width:20px;height:10px;line-height:10px;text-align:center;font-family:'Liberation Sans', sans-serif;font-size:6.5px;color:#555;transform:rotate(-90deg)">9</div>
<div class="b" style="left:31.5px;top:391.34px;width:1px;height:1px;background:#8a8a8a"></div>
<div class="b" style="left:30.5px;top:397.65999999999997px;width:3px;height:1px;background:#8a8a8a"></div>
<div class="b" style="left:31.5px;top:403.97999999999996px;width:1px;height:1px;background:#8a8a8a"></div>
<div class="t" style="left:22px;top:405.8px;width:20px;height:10px;line-height:10px;text-align:center;font-family:'Liberation Sans', sans-serif;font-size:6.5px;color:#555;transform:rotate(-90deg)">10</div>
<div class="b" style="left:31.5px;top:416.62px;width:1px;height:1px;background:#8a8a8a"></div>
<div class="b" style="left:30.5px;top:422.94px;width:3px;height:1px;background:#8a8a8a"></div>
<div class="b" style="left:31.5px;top:429.26px;width:1px;height:1px;background:#8a8a8a"></div>
<div class="t" style="left:22px;top:431.08000000000004px;width:20px;height:10px;line-height:10px;text-align:center;font-family:'Liberation Sans', sans-serif;font-size:6.5px;color:#555;transform:rotate(-90deg)">11</div>
<div class="b" style="left:31.5px;top:441.90000000000003px;width:1px;height:1px;background:#8a8a8a"></div>
<div class="b" style="left:30.5px;top:448.22px;width:3px;height:1px;background:#8a8a8a"></div>
<svg class="b" style="left:0;top:0" width="1024" height="470" viewBox="0 0 1024 470">
<g fill="none" stroke="#444" stroke-width="1">
 <!-- copy -->
 <path d="M10.5 51.5H8.5V45.5H14.5V47.5" stroke="#666"/>
 <rect x="11" y="48" width="6.5" height="6" />
 <rect x="12.5" y="49.5" width="3.5" height="3" fill="#999" stroke="none"/>
 <!-- scissors -->
 <circle cx="29.5" cy="47.3" r="1.4"/><circle cx="29.5" cy="52" r="1.4"/>
 <path d="M30.8 48.3L38 52.8M30.8 51L38 46.3"/>
 <!-- paste -->
 <path d="M10.5 70.5H8.5V64H14.5V65.5" stroke="#666"/>
 <path d="M9.5 63.8H13.5" stroke-width="1.4"/>
 <rect x="11" y="66" width="6.5" height="6.5"/>
 <rect x="12.5" y="67.5" width="3.5" height="3.5" fill="#999" stroke="none"/>
 <!-- select all -->
 <rect x="27.5" y="63.5" width="9.5" height="8.5" stroke="#999" stroke-dasharray="1 1"/>
 <path d="M33.5 66.5V73L35 71.5L36.5 74L37.5 73.5L36.3 71H38Z" fill="#444" stroke="#444" stroke-width=".6"/>
 <!-- separators -->
 <path d="M46.5 42V76M252.5 42V76M447.5 42V76M489.5 42V76" stroke="#dcdcdc"/>
 <!-- text field -->
 <rect x="58.6" y="45.6" width="14" height="10.4" stroke="#8c8c8c" stroke-width="1.7"/>
 <circle cx="58.3" cy="45.3" r="1.3" fill="#444" stroke="none"/><circle cx="72.7" cy="45.3" r="1.3" fill="#444" stroke="none"/>
 <circle cx="58.3" cy="56.2" r="1.3" fill="#444" stroke="none"/><circle cx="72.7" cy="56.2" r="1.3" fill="#444" stroke="none"/>
 <path d="M61.7 47.6V54.4M61 47.5H62.4M61 54.5H62.4" stroke="#555" stroke-width=".8"/>
 <path d="M72.8 72L74.3 73.5L75.8 72M517 72L518.5 73.5L520 72" stroke="#555" stroke-width=".9"/>
 <!-- combo box -->
 <rect x="89.5" y="45.5" width="8" height="12"/>
 <path d="M89.5 50H97.5"/>
 <rect x="97.5" y="45.5" width="5" height="4.5"/>
 <path d="M99 47.3H101" stroke-width=".8"/>
 <path d="M91.3 52.3H95.1M91.3 54.4H95.1" stroke="#777"/>
 <!-- dropdown -->
 <rect x="125.5" y="45.5" width="12.5" height="12"/>
 <path d="M125.5 50H138" stroke="#888"/>
 <path d="M134 47.2H136.5L135.2 48.3Z" fill="#444" stroke="none"/>
 <path d="M128 52.6H135.5M128 54.7H135.5" stroke="#777"/>
 <!-- checkbox -->
 <rect x="165.5" y="45.5" width="12.5" height="12"/>
 <path d="M168 51.8L170.3 54L176 48.7" stroke="#666"/>
 <!-- radio -->
 <circle cx="206.1" cy="51.1" r="7.1" stroke="#555"/>
 <circle cx="206.1" cy="51.1" r="2.8" fill="#222" stroke="none"/>
 <!-- image -->
 <rect x="228.5" y="44.5" width="12.5" height="13"/>
 <circle cx="231.1" cy="47.4" r="1.2" stroke="#555" stroke-width=".8"/>
 <path d="M228.5 54.2L230.5 52.5L232.5 53.6L236.3 49.9L241 54.5" stroke="#555"/>
 <!-- email @ -->
 
 <circle cx="274" cy="51" r="2.6" stroke="#555"/>
 <path d="M276.6 48.3V52.6Q276.8 54.4 278.4 54.3Q280.2 54 280.4 52.7A6.6 6.6 0 1 0 277.3 56.7" stroke="#555"/>
 <!-- phone -->
 <path d="M303.2 45.5Q301 46.5 302.2 49.5Q304.5 54 309.5 56.6Q312.8 57.5 314.2 55.5L312 53.5Q310.5 54.8 309 53.8Q306.2 51.8 304.8 49.2Q304.3 48 305.3 47.3Z" stroke="#555" stroke-width="1.15"/>
 <!-- date & time -->
 <rect x="333.5" y="45.5" width="9" height="8.5" fill="#d0d0d0" stroke="#888"/>
 <path d="M333.5 45.7H342.5" stroke="#555" stroke-width="1.2"/>
 <circle cx="342.7" cy="52.8" r="4.2" fill="#f1f1f1" stroke="#555"/>
 <path d="M342.5 50.5V53H344.5" stroke="#555" stroke-width=".8"/>
 <!-- zip -->
 <path d="M359.5 50L367 44L374.5 50V57.5H359.5Z" stroke="#555"/>
 <text x="367" y="55.2" font-family="Liberation Sans" font-size="5.5" fill="#444" stroke="none" text-anchor="middle">ZIP</text>
 <!-- credit card -->
 <rect x="385.5" y="45.5" width="15.5" height="11.5" rx="1" stroke="#777" stroke-width="1.1"/>
 <path d="M385.5 48.8H401" stroke="#333" stroke-width="1.8"/>
 <rect x="396.7" y="51.5" width="1.6" height="1.6" fill="#333" stroke="none"/>
 <!-- complex field -->
 <rect x="418" y="46" width="14" height="10" stroke="#666" stroke-width="1.2"/>
 <path d="M420.3 48V54M419.7 48H421M419.7 54H421" stroke="#555" stroke-width=".8"/>
 <rect x="423.5" y="48" width="2.8" height="6" stroke="#888" stroke-width=".8"/>
 <rect x="427.5" y="48" width="2.8" height="2.6" stroke="#888" stroke-width=".8"/>
 <rect x="427.5" y="51.3" width="2.8" height="2.7" stroke="#888" stroke-width=".8"/>
 <!-- manage roles -->
 <circle cx="466.8" cy="48.5" r="2.6" stroke="#555"/>
 <path d="M461.5 56.5Q461.5 52.2 466.8 52.2Q470 52.2 471.5 54" stroke="#555"/>
 <path d="M461.5 56.5H472" stroke="#555"/>
 <circle cx="472.5" cy="49.6" r="1.8" fill="#222" stroke="none"/>
 <path d="M470.3 56.8V54.5Q470.5 52.6 472.5 52.6Q475.5 52.6 475.8 55V56.8Z" fill="#222" stroke="none"/>
 <!-- view form eye -->
 <path d="M501.5 50.5Q509.5 42 517.5 50.5Q509.5 59 501.5 50.5Z" stroke="#555"/>
 <circle cx="509.5" cy="50.5" r="4" stroke="#555"/>
 <circle cx="509.5" cy="50.5" r="1.9" fill="#222" stroke="none"/>
 <!-- save as pdf -->
 <path d="M538 47.5V45H543.5L545.5 47" stroke="#777"/>
 <path d="M538 47.5H536.5V51M536.5 52.5V55.5L538 57" stroke="#777"/>
 <path d="M539.5 48.5H545L548.5 52V58.3H539.5Z" stroke="#555"/>
 <path d="M541.8 54H546.3" stroke="#777"/>
 <rect x="541.5" y="55.3" width="5" height="2" fill="#bbb" stroke="none"/>
</g>
<g fill="none" stroke="#555" stroke-width="1">
 <!-- ruler markers -->
 <path d="M229.3 84.5H235.5L232.4 89.5Z" fill="#fff" stroke="#666" stroke-width=".9"/>
 <path d="M232.4 89.5L229.3 93H235.5Z" fill="#fff" stroke="#666" stroke-width=".9"/>
 <rect x="229.3" y="93.5" width="6.2" height="4.5" fill="#fff" stroke="#666" stroke-width=".9"/>
 <path d="M668.3 89.5L665 94.5H671.6Z" fill="#fff" stroke="#666" stroke-width=".9"/>
 <!-- left sidebar -->
 <circle cx="11.6" cy="100.8" r="3.9"/><path d="M14.4 103.6L17.2 106.4"/>
 <path d="M8 123.5H17V129.5H11.2L9.3 131.5V129.5H8Z"/><path d="M10 125.8H15M10 127.5H14" stroke-width=".8"/>
 <path d="M7.5 150.5V147.5H15.5V149" stroke="#666"/><path d="M9.5 149.5H18V156H10.5L9 157V149.5Z"/>
 <rect x="11.4" y="152.2" width="1.3" height="1.3" fill="#333" stroke="none"/><rect x="13.6" y="152.2" width="1.3" height="1.3" fill="#333" stroke="none"/><rect x="15.8" y="152.2" width="1.3" height="1.3" fill="#333" stroke="none"/>
 <path d="M8 174.3H16.5M9.5 176.2H17M8 178.1H16.5M9.5 180H17M8 181.9H15" stroke="#666" stroke-width=".9"/>
 <path d="M7.7 202.5H11V206H7.7Z" stroke="#555" stroke-width="1.1"/><path d="M11 202.3L14.8 200.8V207.8L11 206.2" stroke="#555" stroke-width="1.1"/><ellipse cx="15" cy="204.3" rx="2.2" ry="3.4" fill="#aaa" stroke="#555"/><path d="M9.3 206L9.6 208.4" stroke="#555"/>
 <circle cx="12.5" cy="228.7" r="5.2" stroke="#555"/><path d="M12.5 227.5V231.7" stroke="#555"/><circle cx="12.5" cy="225.9" r=".6" fill="#555" stroke="none"/>
</g>
<g fill="none" stroke="#a5a5a5" stroke-width="1">
 <!-- right icon bar -->
 <path d="M1013.8 98.5H1016.8" stroke="#333" stroke-width=".9"/><path d="M1014 98.3V106M1016 98.3V106" stroke="#888" stroke-width="1"/><path d="M1014.3 98.2Q1010.4 98.2 1010.6 100.4Q1010.8 102.6 1014.3 102.6Z" fill="#222" stroke="none"/>
 <rect x="1008.5" y="123.5" width="10" height="7.5"/><path d="M1008.5 125.8H1018.5M1008.5 128.3H1018.5M1011.8 123.5V131M1015.2 123.5V131" stroke-width=".8"/>
 <rect x="1008.5" y="148.5" width="9" height="8.5"/><path d="M1008.8 154.5L1011.2 152.3L1013.3 154L1017.3 151.5"/>
 <rect x="1009.5" y="173.5" width="7.5" height="9.5"/><path d="M1009.5 175.3H1017M1009.5 181.2H1017" stroke-width="1.2"/>
 <rect x="1008.5" y="199.5" width="5" height="4.5"/><circle cx="1014" cy="205" r="3.3" fill="#f1f1f1"/>
 <path d="M1008.5 230.5H1010.5V234H1008.5ZM1012 227.5H1014V234H1012ZM1015.5 224.5H1017.5V234H1015.5Z" stroke-width=".9"/>
 <path d="M1009.5 249.5H1014M1011.8 249.5V254.5" /><path d="M1013.5 251.5Q1016.5 250.8 1016.5 252.5V254.5H1014.5Q1013.3 254.5 1013.5 253.3Q1013.8 252.4 1016.5 252.6" stroke-width=".8"/><path d="M1009.5 259.5Q1013 256.5 1016.5 259.5" stroke-width=".9"/>
 <rect x="1008.5" y="275.5" width="10" height="7.5"/><path d="M1008.5 275.5L1013.5 279.5L1018.5 275.5M1008.5 283L1012 279M1018.5 283L1015 279" stroke-width=".8"/>
 <rect x="1008.3" y="302.5" width="10.5" height="6.5" stroke="#d8d8d8"/><path d="M1009.5 303.3V308.3" stroke="#eee" stroke-width="1"/>
</g>
<g fill="none" stroke="#444" stroke-width="1">
 <!-- status bar icons -->
 <path d="M77.5 457.5H85M77.5 459.2H85" stroke="#555"/>
 <text x="77.3" y="466" font-family="Liberation Sans" font-size="4.6" fill="#555" stroke="none">123</text>
 <path d="M786.2 461.6L787.8 463.2L789.4 461.6" stroke="#555" stroke-width=".9"/>
 <circle cx="801" cy="462.3" r="4.8" stroke="#444"/><ellipse cx="801" cy="462.3" rx="2" ry="4.8" stroke="#444" stroke-width=".8"/><path d="M796.3 460.7H805.7M796.3 463.9H805.7" stroke="#444" stroke-width=".8"/>
 <text x="817" y="461" font-family="Liberation Sans" font-size="4" fill="#e8e8e8" stroke="none">ABC</text>
 <path d="M818.5 463L821 465.8L825.5 460.5" stroke="#fff" stroke-width="1.1"/>
 <path d="M849.5 460V467.5H842.5V458.5H848" stroke="#666"/><path d="M844 461H847M844 463H846.5M844 465H845.5" stroke="#777" stroke-width=".8"/><path d="M846 465.5L846.5 463.5L851 459L852.5 460.5L848 465Z" fill="#f1f1f1" stroke="#555" stroke-width=".8"/>
 <path d="M856.3 461.8L857.7 463.2L859.1 461.8" stroke="#555" stroke-width=".9"/>
 <rect x="877" y="457" width="8" height="10.3" fill="#666" stroke="none"/><path d="M878 458.2L880.3 460.7M884 458.2L881.7 460.7M878 466.1L880.3 463.6M884 466.1L881.7 463.6" stroke="#f1f1f1" stroke-width="1.1"/>
 <path d="M896.5 458.5V466M906.5 458.5V466M897.5 462.3H905.5M899 460.8L897.5 462.3L899 463.8M904 460.8L905.5 462.3L904 463.8" stroke="#555" stroke-width=".9"/>
 <path d="M918.5 462.5H925.7" stroke="#777"/>
 <path d="M989.7 462.5H996.7M993.2 459V466" stroke="#555"/>
</g></svg>
</body></html>
